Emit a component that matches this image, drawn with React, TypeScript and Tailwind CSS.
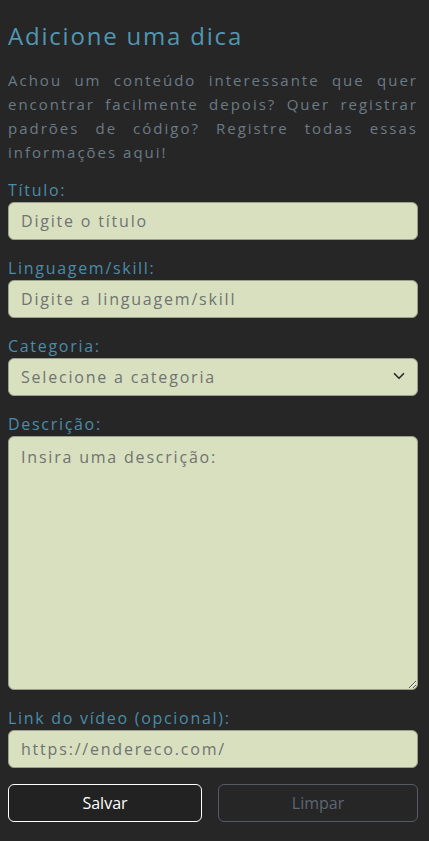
import { ChevronDown } from 'lucide-react';

const font = { fontFamily: '"Open Sans", "DejaVu Sans", sans-serif' };

function Field({ label, children }: { label: string; children: React.ReactNode }) {
  return (
    <div className="mt-4 flex flex-col first:mt-0">
      <label className="text-[16px] leading-6 tracking-[1.7px] text-[#4b8ca8]">{label}</label>
      {children}
    </div>
  );
}

const boxCls =
  'h-[38px] w-full rounded-md border border-[#9a9f8c] bg-[#d9e0bf] px-3 text-[16px] tracking-[1.8px] outline-none placeholder:text-[#6f7372]';

export default function App() {
  return (
    <div className="min-h-[841px] bg-[#262626] pl-2 pr-[11px] pt-5" style={font}>
      <h1 className="text-[24px] leading-8 font-medium tracking-[1.8px] text-[#5196b2]">Adicione uma dica</h1>
      <p className="mt-4 text-justify text-[15px] leading-6 tracking-[2px] text-[#6b7b86]">
        Achou um conteúdo interessante que quer encontrar facilmente depois? Quer registrar padrões de código? Registre
        todas essas informações aqui!
      </p>

      <form className="mt-[14px] flex flex-col" onSubmit={(e) => e.preventDefault()}>
        <Field label="Título:">
          <input className={boxCls + ' text-[#444]'} placeholder="Digite o título" />
        </Field>
        <Field label="Linguagem/skill:">
          <input className={boxCls + ' text-[#444]'} placeholder="Digite a linguagem/skill" />
        </Field>
        <Field label="Categoria:">
          <div className="relative">
            <select defaultValue="" className={boxCls + ' appearance-none text-[#6f7372]'} style={font}>
              <option value="" disabled>
                Selecione a categoria
              </option>
            </select>
            <ChevronDown
              className="pointer-events-none absolute right-[10px] top-[9px] h-[18px] w-[18px] text-[#2a2a2a]"
              strokeWidth={2.2}
            />
          </div>
        </Field>
        <Field label="Descrição:">
          <textarea
            className="h-[254px] w-full rounded-md border border-[#9a9f8c] bg-[#d9e0bf] px-3 py-2 text-[16px] tracking-[1.8px] text-[#444] outline-none placeholder:text-[#6f7372]"
            placeholder="Insira uma descrição:"
            style={font}
          />
        </Field>
        <Field label="Link do vídeo (opcional):">
          <input className={boxCls + ' text-[#444]'} placeholder="https://endereco.com/" />
        </Field>

        <div className="mt-4 flex gap-4">
          <button
            type="submit"
            className="h-[38px] w-[194px] rounded-md border border-white bg-[#222] text-[16px] text-white"
          >
            Salvar
          </button>
          <button
            type="button"
            className="h-[38px] flex-1 rounded-md border border-[#555b66] bg-transparent text-[16px] text-[#5d6673]"
          >
            Limpar
          </button>
        </div>
      </form>
    </div>
  );
}
